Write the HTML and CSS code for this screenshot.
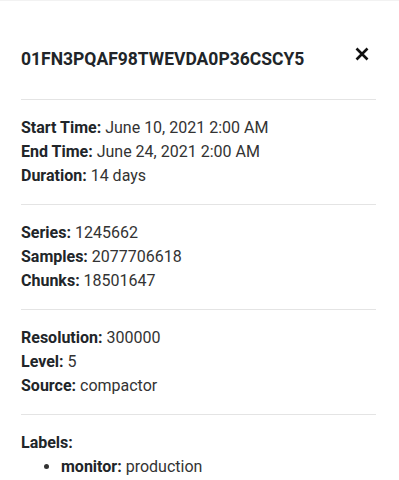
FILE: index.html
```html
<!DOCTYPE html>
<html>
<head>
<meta charset="utf-8">
<link rel="stylesheet" href="styles.css">
</head>
<body>
<div class="panel">
  <div class="header">
    <h2 class="title">01FN3PQAF98TWEVDA0P36CSCY5</h2>
    <button class="close" aria-label="Close">
      <svg width="14" height="14" viewBox="0 0 14 14"><path d="M1.5 1.5 L12.5 12.5 M12.5 1.5 L1.5 12.5" stroke="#111" stroke-width="2.6" fill="none"/></svg>
    </button>
  </div>
  <hr class="sep">
  <div class="section">
    <div class="row"><b>Start Time:</b> June 10, 2021 2:00 AM</div>
    <div class="row"><b>End Time:</b> June 24, 2021 2:00 AM</div>
    <div class="row"><b>Duration:</b> 14 days</div>
  </div>
  <hr class="sep">
  <div class="section">
    <div class="row"><b>Series:</b> 1245662</div>
    <div class="row"><b>Samples:</b> 2077706618</div>
    <div class="row"><b>Chunks:</b> 18501647</div>
  </div>
  <hr class="sep">
  <div class="section">
    <div class="row"><b>Resolution:</b> 300000</div>
    <div class="row"><b>Level:</b> 5</div>
    <div class="row"><b>Source:</b> compactor</div>
  </div>
  <hr class="sep">
  <div class="section">
    <div class="row"><b>Labels:</b></div>
    <ul class="labels">
      <li><b>monitor:</b> production</li>
    </ul>
  </div>
</div>
</body>
</html>
```
FILE: styles.css
```css
html, body {
  margin: 0;
  padding: 0;
  background: #fff;
}
body {
  font-family: Roboto, "Liberation Sans", sans-serif;
  color: #333;
  font-size: 16px;
  line-height: 24px;
}
.panel {
  border-top: 1px solid #f2f2f2;
  padding: 0 23px 0 21px;
}
.header {
  display: flex;
  align-items: center;
  justify-content: space-between;
  height: 98px;
  padding-top: 18px;
  box-sizing: border-box;
}
.title {
  margin: 0;
  font-size: 17.5px;
  font-weight: 700;
  line-height: 24px;
  color: #212529;
}
.close {
  border: 0;
  background: none;
  padding: 0;
  margin: 0 7px 10px 0;
  width: 14px;
  height: 14px;
  display: flex;
  cursor: pointer;
}
.sep {
  margin: 0;
  border: 0;
  border-top: 1px solid #e4e4e4;
}
.section {
  padding: 16px 0;
}
.row b, .labels b {
  font-weight: 700;
  color: #212529;
}
.labels {
  margin: 0;
  padding-left: 40px;
}
```
